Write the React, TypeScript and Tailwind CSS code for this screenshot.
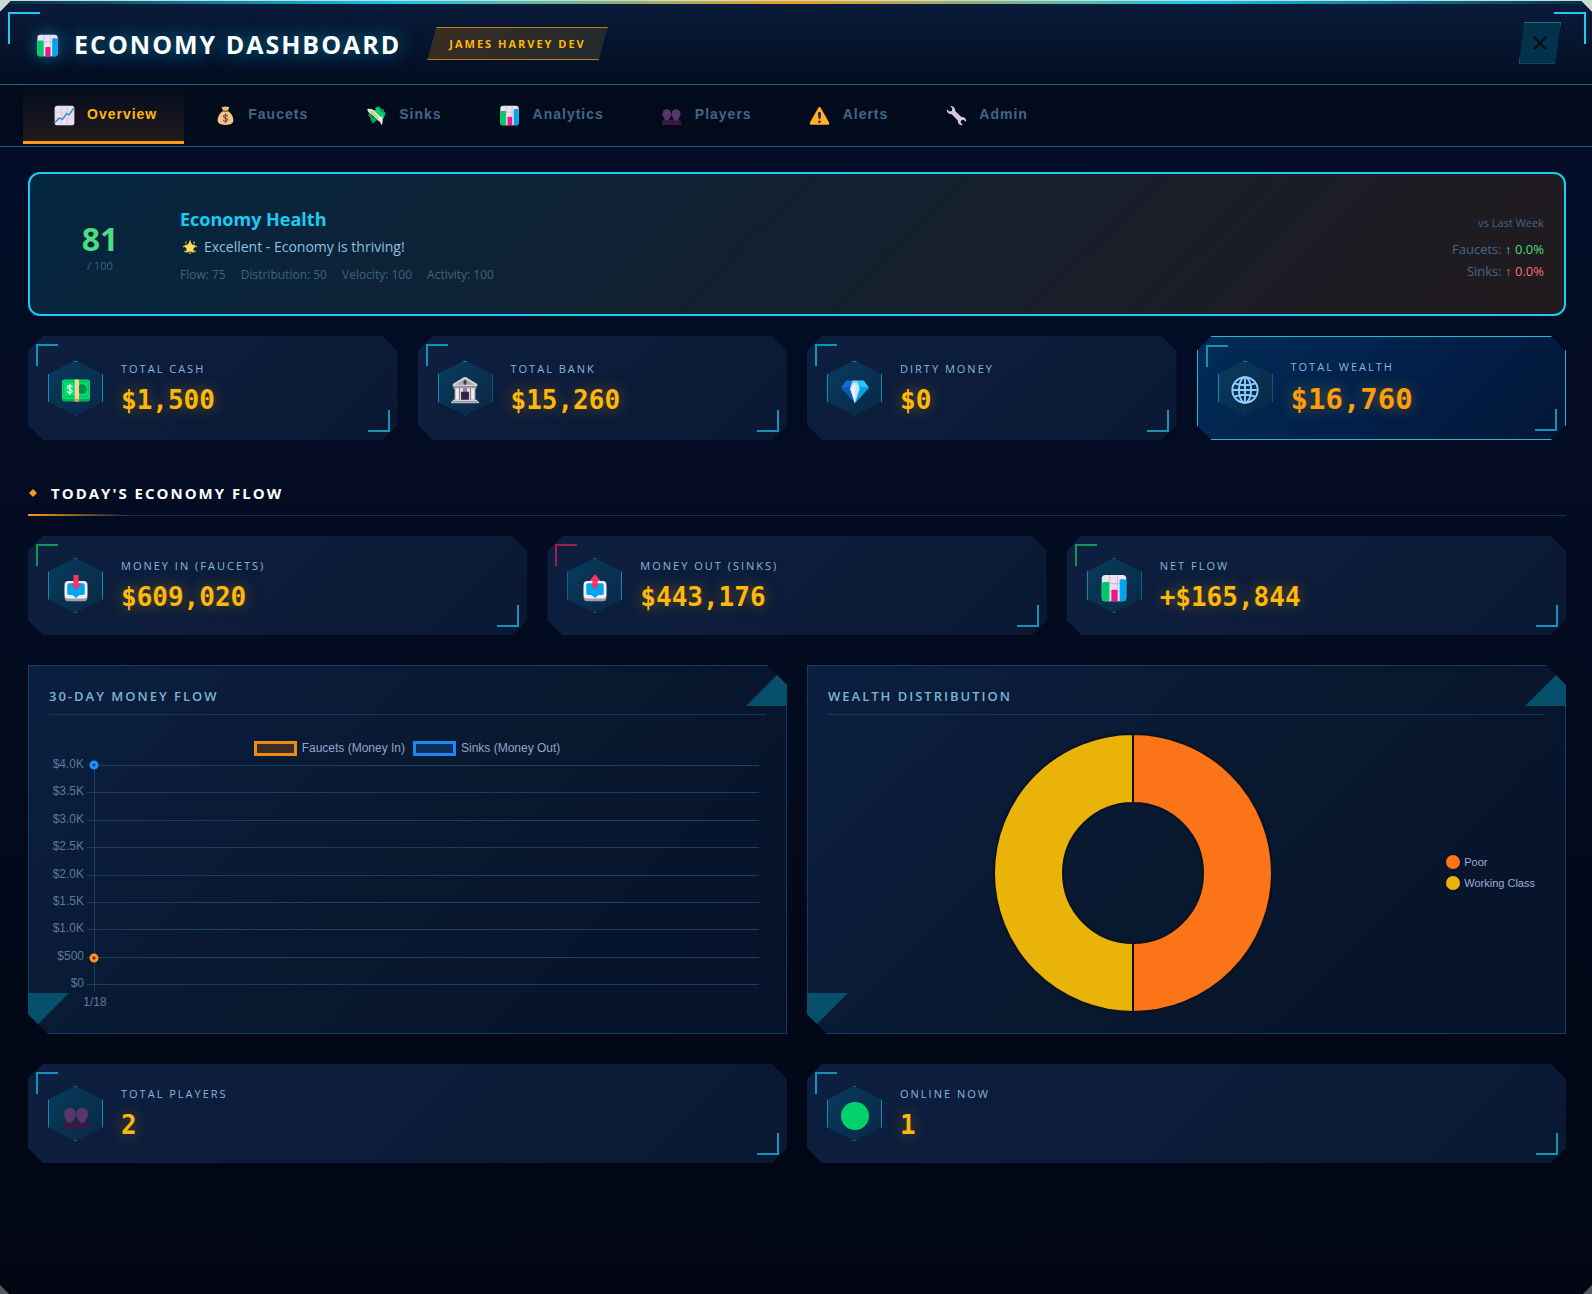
import React, { ReactNode, useState } from "react";

type IconProps = { className?: string };

const ChartBars = ({ className }: IconProps) => (
  <svg viewBox="0 0 32 32" className={className} aria-hidden="true">
    <rect x="2" y="1" width="28" height="30" rx="4" fill="#ede1f2" />
    <path d="M2 11h28M2 20h28M11 1v30M20 1v30" stroke="#cdbcdc" strokeWidth="1.2" />
    <path d="M4 9h6.500v22H6a4 4 0 0 1-4-4V11a2 2 0 0 1 2-2z" fill="#00c968" />
    <path d="M14.500 18h4a1.500 1.500 0 0 1 1.500 1.500V31h-7V19.500a1.500 1.500 0 0 1 1.500-1.500z" fill="#f4128b" />
    <path d="M24 6h4a2 2 0 0 1 2 2v19a4 4 0 0 1-4 4h-3.500V7.500A1.500 1.500 0 0 1 24 6z" fill="#00a6ed" />
  </svg>
);

const ChartUp = ({ className }: IconProps) => (
  <svg viewBox="0 0 32 32" className={className} aria-hidden="true">
    <rect x="1" y="1" width="30" height="30" rx="4" fill="#e9e0f2" />
    <path d="M1 11h30M1 20h30M11 1v30M20 1v30" stroke="#d2c1dd" strokeWidth="1.2" />
    <path d="M2 26l6-6 5 2 6-9 4 2 7-10" fill="none" stroke="#2f93c9" strokeWidth="2.2" strokeLinecap="round" strokeLinejoin="round" />
  </svg>
);

const MoneyBag = ({ className }: IconProps) => (
  <svg viewBox="0 0 32 32" className={className} aria-hidden="true">
    <path d="M11 2.500c2 1 3 .3 5-.5 2 .8 3 1.500 5 .5 1 .3.900 1.500.3 2.500L19 9h-6l-2.300-4c-.6-1-.7-2.200.3-2.500z" fill="#f3bb7e" />
    <path d="M12.500 9h7C25 12 28 18 28 23c0 5-4 7.500-12 7.500S4 28 4 23c0-5 3-11 8.500-14z" fill="#f6c48b" />
    <rect x="11" y="8" width="10" height="2.600" rx="1.300" fill="#9a6a4a" />
    <path d="M19 17c-.6-1.200-1.600-1.700-3-1.700-1.800 0-3 .9-3 2.300 0 3.300 6 1.600 6 4.900 0 1.500-1.200 2.400-3 2.400-1.500 0-2.700-.6-3.200-1.900M16 13.500v13.300" fill="none" stroke="#6b4a43" strokeWidth="1.700" strokeLinecap="round" />
  </svg>
);

const MoneyWings = ({ className }: IconProps) => (
  <svg viewBox="0 0 32 32" className={className} aria-hidden="true">
    <path d="M14 4l5-2 11 10-3 8-6 2z" fill="#00b566" />
    <path d="M8 12l10-8 10 11-8 9z" fill="#00d26a" />
    <path d="M21 6c3-1 6 0 7 2-1 2-3 3-5 2z" fill="#12864f" />
    <path d="M2 6c4-1 8 0 11 3l11 11-4 5L8 14C4 12 2 9 2 6z" fill="#f1ecd4" />
    <path d="M5 8c3 0 6 1 8 4l8 9-2 2L9 13C7 12 5 10 5 8z" fill="#b8d86a" />
    <path d="M4 12l6 4-1 5-5-4zM6 20l6-2 5 5-7 5z" fill="#00a65c" />
    <path d="M18 21l7-4c1 5 1 9-1 14-2-4-4-7-6-10z" fill="#e8e1ee" />
  </svg>
);

const Busts = ({ className }: IconProps) => (
  <svg viewBox="0 0 32 32" className={className} aria-hidden="true">
    <path d="M1 29c0-5 3-7.500 8-7.500 3 0 5.500 1 7 2 1.500-1 4-2 7-2 5 0 8 2.500 8 7.500 0 1-.6 1.500-1.500 1.500h-27C1.600 30.500 1 30 1 29z" fill="#3a1a45" />
    <path d="M9 6.500c4 0 6.500 2.500 6.500 6.500 1 1 .6 3-.5 3.500-.7 3-2.500 5.500-3.500 6.300-1 1.500-4 1.500-5 0C5.500 22 3.700 19.500 3 16.500 1.900 16 1.500 14 2.500 13c0-4 2.500-6.500 6.500-6.500z" fill="#56366b" />
    <path d="M23 6.500c4 0 6.500 2.500 6.500 6.500 1 1 .6 3-.5 3.500-.7 3-2.500 5.500-3.500 6.300-1 1.500-4 1.500-5 0-1-.8-2.800-3.300-3.500-6.300-1.100-.5-1.500-2.500-.5-3.500 0-4 2.500-6.500 6.500-6.500z" fill="#56366b" />
  </svg>
);

const Warning = ({ className }: IconProps) => (
  <svg viewBox="0 0 32 32" className={className} aria-hidden="true">
    <path d="M14.200 4a2.100 2.100 0 0 1 3.600 0l12.800 22.800c.8 1.500-.2 3.200-1.800 3.200H3.200c-1.600 0-2.600-1.700-1.800-3.200z" fill="#ffb02e" />
    <path d="M16 10.500c1.500 0 2.400 1 2.300 2.400l-.7 7.400c-.1 1-.7 1.600-1.600 1.600s-1.500-.6-1.600-1.600l-.7-7.400c-.1-1.400.8-2.400 2.300-2.400z" fill="#321b41" />
    <circle cx="16" cy="25.500" r="1.900" fill="#321b41" />
  </svg>
);

const WrenchIcon = ({ className }: IconProps) => (
  <svg viewBox="0 0 32 32" className={className} aria-hidden="true">
    <path d="M6.500 1.800c4.500-.6 8 2.700 7.500 7.200l9.500 9.300c4.500-.6 8.200 3 7 7.700l-3.700-3.500-3.600.7-.9 3.600 3.600 3.700c-4.700 1-8.400-2.500-7.900-7L8.700 14C4.300 14.500.6 11 1.500 6.500L5 10l3.900-.8.700-3.800z" fill="#d3c9de" />
  </svg>
);

const GlowStar = ({ className }: IconProps) => (
  <svg viewBox="0 0 32 32" className={className} aria-hidden="true">
    <g fill="#f5b82e">
      <circle cx="16" cy="2.500" r="2" /><circle cx="25.500" cy="5.500" r="2" /><circle cx="30" cy="15" r="2" />
      <circle cx="27" cy="26" r="2" /><circle cx="16" cy="30" r="2" /><circle cx="5" cy="26" r="2" />
      <circle cx="2" cy="15" r="2" /><circle cx="6.500" cy="5.500" r="2" />
    </g>
    <path d="M16 6l3.400 6 7.100 1.500-4.900 5.500.8 7.500-6.400-3-6.400 3 .8-7.500-4.900-5.500 7.100-1.500z" fill="#ffd95c" stroke="#ffd95c" strokeWidth="4.500" strokeLinejoin="round" />
  </svg>
);

const Cash = ({ className }: IconProps) => (
  <svg viewBox="0 0 32 32" className={className} aria-hidden="true">
    <rect x="0" y="6" width="32" height="23" rx="2.500" fill="#00b25b" />
    <rect x="0" y="4" width="32" height="22" rx="2.500" fill="#00e070" />
    <rect x="2" y="6.500" width="28" height="17" rx="1.500" fill="none" stroke="#00b35c" strokeWidth="1.200" />
    <circle cx="23" cy="15" r="5.500" fill="#008a4d" />
    <path d="M11.500 12.500c-.5-1.200-1.400-1.600-2.500-1.600-1.500 0-2.600.8-2.600 2 0 2.900 5.300 1.400 5.300 4.300 0 1.300-1.100 2.100-2.700 2.100-1.300 0-2.300-.5-2.800-1.700M9 9.500v11.400" fill="none" stroke="#d8ffe9" strokeWidth="1.500" strokeLinecap="round" />
    <rect x="14.500" y="4" width="5" height="25" fill="#ffcf8f" />
    <rect x="14.500" y="26" width="5" height="3" fill="#e59c5b" />
  </svg>
);

const Bank = ({ className }: IconProps) => (
  <svg viewBox="0 0 32 32" className={className} aria-hidden="true">
    <path d="M14.500 1.500a3 3 0 0 1 3 0L30 9v3H2V9z" fill="#d4d0d6" />
    <path d="M16 3.500L27 10H5z" fill="#aaa5ad" />
    <path d="M3 12h26v3H3z" fill="#a39fa6" />
    <path d="M4 14h24v14H4z" fill="#8a858e" />
    <path d="M5 14h4v13H5zM10.500 14h3v13h-3zM18.500 14h3v13h-3zM23 14h4v13h-4z" fill="#eeecef" />
    <path d="M11.500 18h9v9.500h-9z" fill="#35214a" />
    <path d="M2 27h28v1.800H2z" fill="#d4d0d6" />
    <path d="M0 28.800h32V31H0z" fill="#b8b4bb" />
    <ellipse cx="16" cy="7.400" rx="1.800" ry="2.800" fill="#47384f" />
  </svg>
);

const Gem = ({ className }: IconProps) => (
  <svg viewBox="0 0 32 32" className={className} aria-hidden="true">
    <path d="M6 5h7l-2.500 8.500H0z" fill="#1769e0" />
    <path d="M13 5h6l2.500 8.500h-11z" fill="#7ed3ff" />
    <path d="M19 5h7l6 8.500H21.500z" fill="#26c9fc" />
    <path d="M0 13.500h10.500L16 31z" fill="#0f55c4" />
    <path d="M32 13.500H21.500L16 31z" fill="#00a6ed" />
    <path d="M13.500 8h5l3 6.500L16 31l-5.500-16.500z" fill="#c4e6ff" />
    <path d="M16 8v23l-5.500-16.500z" fill="#e4f4ff" />
  </svg>
);

const GlobeIcon = ({ className }: IconProps) => (
  <svg viewBox="0 0 32 32" className={className} fill="none" stroke="#8ecbff" strokeWidth="2.200" aria-hidden="true">
    <circle cx="16" cy="16" r="14.500" />
    <ellipse cx="16" cy="16" rx="7" ry="14.500" />
    <path d="M16 1.500v29M1.500 16h29M4 8.500c7 2.500 17 2.500 24 0M4 23.500c7-2.500 17-2.500 24 0" />
  </svg>
);

const Tray = ({ className, children }: IconProps & { children: ReactNode }) => (
  <svg viewBox="0 0 32 32" className={className} aria-hidden="true">
    <rect x="3" y="11" width="26" height="20" rx="4" fill="#a39aab" />
    <rect x="3" y="8" width="26" height="20" rx="4" fill="#f3eef7" />
    <path d="M8 10.500h16a2 2 0 0 1 2 2V22a2 2 0 0 1-2 2h-4l-4 3.500L12 24H8a2 2 0 0 1-2-2v-9.500a2 2 0 0 1 2-2z" fill="#00a6ed" />
    {children}
  </svg>
);

const Inbox = ({ className }: IconProps) => (
  <Tray className={className}><path d="M13 1h6v10h3.200L16 17.500 9.800 11H13z" fill="#f8315f" /></Tray>
);
const Outbox = ({ className }: IconProps) => (
  <Tray className={className}><path d="M13 16V8H9.500L16 0l6.500 8H19v8z" fill="#f8315f" /></Tray>
);
const GreenDot = ({ className }: IconProps) => (
  <svg viewBox="0 0 32 32" className={className} aria-hidden="true"><circle cx="16" cy="16" r="16" fill="#00d26a" /></svg>
);

type Icon = (p: IconProps) => React.JSX.Element;

const tabs: { label: string; Icon: Icon }[] = [
  { label: "Overview", Icon: ChartUp },
  { label: "Faucets", Icon: MoneyBag },
  { label: "Sinks", Icon: MoneyWings },
  { label: "Analytics", Icon: ChartBars },
  { label: "Players", Icon: Busts },
  { label: "Alerts", Icon: Warning },
  { label: "Admin", Icon: WrenchIcon },
];

const accents = {
  cyan: "border-[#0f93b8]",
  green: "border-[#11935a]",
  red: "border-[#a41f48]",
};

function StatCard({ Icon, label, value, accent = "cyan", featured = false }: {
  Icon: Icon; label: string; value: string; accent?: keyof typeof accents; featured?: boolean;
}) {
  return (
    <article
      className={
        "relative flex items-center gap-[18px] p-5 [clip-path:polygon(15px_0,calc(100%-15px)_0,100%_15px,100%_calc(100%-15px),calc(100%-15px)_100%,15px_100%,0_calc(100%-15px),0_15px)] " +
        (featured
          ? "border border-[#27b6d8] bg-linear-135 from-[#022c57] via-[#01204a] to-[#021635]"
          : "bg-linear-135 from-[#0d1f40] to-[#0a1832]")
      }
    >
      <span className={"absolute top-2 left-2 size-[22px] border-t-2 border-l-2 " + accents[accent]} />
      <span className="absolute right-2 bottom-2 size-[22px] border-r-2 border-b-2 border-[#1593b8]" />
      <div className="flex size-[55px] shrink-0 items-center justify-center border border-[#108aae] bg-linear-135 from-[#083c5c] to-[#092747] pt-1 [clip-path:polygon(50%_0,100%_25%,100%_75%,50%_100%,0_75%,0_25%)]">
        <Icon className="size-7" />
      </div>
      <div>
        <h3 className="text-[11px] leading-5 tracking-[2px] text-[#86b6dc] uppercase">{label}</h3>
        <p
          className={
            "pt-[3px] font-['DejaVu_Sans_Mono',monospace] font-bold [text-shadow:0_0_15px_rgba(255,183,0,0.4)] " +
            (featured ? "text-[29px] leading-[39px] text-[#ff9d0a]" : "text-[26px] leading-[36px] text-[#ffb70a]")
          }
        >
          {value}
        </p>
      </div>
    </article>
  );
}

function Panel({ title, children }: { title: string; children: ReactNode }) {
  return (
    <section className="relative border border-[#153a66] bg-linear-135 from-[#0b1f41] via-[#08182f] to-[#07132a] p-5 [clip-path:polygon(0_0,calc(100%-20px)_0,100%_20px,100%_100%,20px_100%,0_calc(100%-20px))]">
      <span className="absolute -top-px -right-px size-[41px] bg-[#06506c] [clip-path:polygon(100%_0,100%_100%,0_100%)]" />
      <span className="absolute -bottom-px -left-px size-[41px] bg-[#06506c] [clip-path:polygon(0_0,100%_0,0_100%)]" />
      <h2 className="border-b border-[#14365f] pb-2 text-[13px] leading-5 font-semibold tracking-[2px] text-[#7fb3d6] uppercase">{title}</h2>
      <div className="mt-[18px] h-[280px]">{children}</div>
    </section>
  );
}

const ticks = ["$4.0K", "$3.5K", "$3.0K", "$2.5K", "$2.0K", "$1.5K", "$1.0K", "$500", "$0"];
const tickY = (i: number) => 32 + Math.round(i * 27.4);

function FlowChart() {
  return (
    <div className="relative h-full pr-[7px] font-['Liberation_Sans',Arial,sans-serif] text-[12px]">
      <ul className="absolute inset-x-0 top-2 flex items-center justify-center gap-2 pr-px leading-[15px] text-[#94a4c9]">
        <li className="flex items-center gap-[5px]">
          <span className="h-[15px] w-[43px] border-3 border-[#f08a17] bg-[#3a2c27]" />Faucets (Money In)
        </li>
        <li className="flex items-center gap-[5px]">
          <span className="h-[15px] w-[43px] border-3 border-[#1e88f0] bg-[#0a2f5c]" />Sinks (Money Out)
        </li>
      </ul>
      <svg className="h-full w-full" role="img" aria-label="30-day money flow">
        {ticks.map((t, i) => (
          <g key={t}>
            <line x1="38" x2="100%" y1={tickY(i)} y2={tickY(i)} stroke="#1c3d66" shapeRendering="crispEdges" />
            <text x="35" y={tickY(i) + 3} textAnchor="end" fill="#5b7a9d">{t}</text>
          </g>
        ))}
        <line x1="45" x2="45" y1="32" y2="259" stroke="#1c3d66" shapeRendering="crispEdges" />
        <text x="46" y="273" textAnchor="middle" fill="#5b7a9d">1/18</text>
        <circle cx="45" cy="32" r="3" fill="#0b3d78" stroke="#1e90ff" strokeWidth="3" />
        <circle cx="45" cy="225" r="3" fill="#4a2c10" stroke="#ff9417" strokeWidth="3" />
      </svg>
    </div>
  );
}

function WealthChart() {
  return (
    <div className="flex h-full items-center font-['Liberation_Sans',Arial,sans-serif]">
      <div className="flex flex-1 justify-center pr-2">
        <svg viewBox="0 0 280 280" className="h-[280px] w-[280px]" role="img" aria-label="Wealth distribution">
          <g stroke="#0a1220" strokeWidth="2">
            <path d="M140 1a139 139 0 0 1 0 278v-69a70 70 0 0 0 0-140z" fill="#fb7417" />
            <path d="M140 279a139 139 0 0 1 0-278v69a70 70 0 0 0 0 140z" fill="#eab30a" />
          </g>
        </svg>
      </div>
      <ul className="flex flex-col gap-[7px] pr-[10px] pb-[2px] text-[11px] leading-[14px] text-[#9dadd6]">
        <li className="flex items-center gap-1"><span className="size-[14px] rounded-full bg-[#fb7417]" />Poor</li>
        <li className="flex items-center gap-1"><span className="size-[14px] rounded-full bg-[#eab30a]" />Working Class</li>
      </ul>
    </div>
  );
}

export default function App() {
  const [active, setActive] = useState("Overview");
  return (
    <div className="min-h-screen overflow-hidden bg-linear-to-b from-[#c9dcd2] to-[#55595e] pt-px font-['Open_Sans','Segoe_UI',sans-serif]">
      <div className="relative min-h-[calc(100vh-1px)] bg-linear-to-b from-[#030d2a] via-[#020b1f] to-[#010612] [clip-path:polygon(11px_0,calc(100%-11px)_0,100%_11px,100%_calc(100%-9px),calc(100%-9px)_100%,9px_100%,0_calc(100%-9px),0_11px)]">
        <div className="absolute inset-x-0 top-0 h-[3px] [background-image:linear-gradient(90deg,#0a2b48_0%,#12c8f0_25%,#f39a17_50%,#12c8f0_75%,#0a2b48_100%)]" />
        <span className="absolute top-[11px] left-2 size-8 border-t-2 border-l-2 border-[#17cdf2]" />
        <span className="absolute top-[11px] right-[6px] size-8 border-t-2 border-r-2 border-[#17cdf2]" />

        <header className="flex h-[84px] items-center justify-between border-b border-[#176a80] bg-linear-to-b from-[#0a1c3b] to-[#030d21] pr-[31px] pl-9">
          <div className="flex items-center gap-[26px] pt-[2px]">
            <h1 className="flex items-center gap-[15px] text-[25px] leading-8 font-bold tracking-[2px] text-white uppercase [text-shadow:0_0_20px_rgba(0,212,255,0.6)]">
              <ChartBars className="mt-1 size-[23px] drop-shadow-[0_0_8px_rgba(0,212,255,0.5)]" />
              Economy Dashboard
            </h1>
            <span className="border border-[#b87b1d] bg-linear-135 from-[#3a2c22] to-[#1f2a2c] px-[21px] py-2 text-[11px] leading-[15px] font-bold tracking-[2px] text-[#ffb70a] uppercase [clip-path:polygon(5%_0,100%_0,95%_100%,0_100%)]">
              James Harvey Dev
            </span>
          </div>
          <button aria-label="Close" className="flex size-[42px] items-center justify-center border border-[#19758e] bg-[#04324d] [clip-path:polygon(12%_0,100%_0,86%_100%,0_100%)]">
            <svg viewBox="0 0 14 14" className="size-[14px]" stroke="#02090f" strokeWidth="1.800" fill="none"><path d="M1 1l12 12M13 1L1 13" /></svg>
          </button>
        </header>

        <nav className="flex border-b border-[#176078] bg-[#020b1c] pb-[2px] pl-[23px]">
          {tabs.map(({ label, Icon }) => (
            <button
              key={label}
              onClick={() => setActive(label)}
              className={
                "flex h-[59px] items-center gap-[10px] border-b-3 pt-[3px] pr-[27px] pl-7 font-['Liberation_Sans',Arial,sans-serif] text-[14px] font-bold tracking-[1px] " +
                (active === label
                  ? "border-[#ff9a14] bg-linear-to-b from-[#030b1c] to-[#211a1c] text-[#ffb70a]"
                  : "border-transparent text-[#3f6788]")
              }
            >
              <span className="flex w-[26px] justify-center"><Icon className="mt-[2px] size-[21px]" /></span>
              <span>{label}</span>
            </button>
          ))}
        </nav>

        <main className="pt-[25px] pr-[26px] pb-10 pl-7">
          <section className="flex h-[144px] items-center gap-[30px] rounded-xl border-2 border-[#17cdf2] bg-linear-135 from-[#032640] via-[#122030] to-[#211a1d] px-5 pt-[6px]">
            <div className="w-[100px] text-center">
              <p className="text-[32px] leading-9 font-bold text-[#4ade80]">81</p>
              <p className="pt-px text-[11px] leading-4 text-[#3f637f]">/ 100</p>
            </div>
            <div className="flex-1">
              <h2 className="text-[18px] leading-7 font-bold text-[#17cdf2]">Economy Health</h2>
              <p className="flex items-center gap-[7px] pl-[3px] text-[14px] leading-7 text-[#8fc0e0]">
                <GlowStar className="size-[14px]" />Excellent - Economy is thriving!
              </p>
              <div className="flex gap-[15px] text-[12px] leading-7 text-[#3f637f]">
                <span>Flow: 75</span><span>Distribution: 50</span><span>Velocity: 100</span><span>Activity: 100</span>
              </div>
            </div>
            <div className="text-right text-[13px] leading-[22px] text-[#45678a]">
              <p className="mb-1 text-[11px]">vs Last Week</p>
              <p>Faucets: <span className="text-[#4ade80]">↑ 0.0%</span></p>
              <p>Sinks: <span className="text-[#f87171]">↑ 0.0%</span></p>
            </div>
          </section>

          <div className="mt-5 grid grid-cols-4 gap-5">
            <StatCard Icon={Cash} label="Total Cash" value="$1,500" />
            <StatCard Icon={Bank} label="Total Bank" value="$15,260" />
            <StatCard Icon={Gem} label="Dirty Money" value="$0" />
            <StatCard Icon={GlobeIcon} label="Total Wealth" value="$16,760" featured />
          </div>

          <h2 className="relative mt-[41px] flex items-center gap-[14px] border-b border-[#12305c] pb-[10px] pl-[1px] text-[15px] leading-6 font-bold tracking-[2px] text-white uppercase">
            <svg viewBox="0 0 8 8" className="size-2" aria-hidden="true"><path d="M4 0l4 4-4 4-4-4z" fill="#ff9a14" /></svg>
            Today's Economy Flow
            <span className="absolute -bottom-px left-0 h-[2px] w-[100px] bg-linear-to-r from-[#ff9a14] to-transparent" />
          </h2>

          <div className="mt-5 grid grid-cols-3 gap-5">
            <StatCard Icon={Inbox} label="Money In (Faucets)" value="$609,020" accent="green" />
            <StatCard Icon={Outbox} label="Money Out (Sinks)" value="$443,176" accent="red" />
            <StatCard Icon={ChartBars} label="Net Flow" value="+$165,844" accent="green" />
          </div>

          <div className="mt-[30px] grid grid-cols-2 gap-5">
            <Panel title="30-Day Money Flow"><FlowChart /></Panel>
            <Panel title="Wealth Distribution"><WealthChart /></Panel>
          </div>

          <div className="mt-[30px] grid grid-cols-2 gap-5">
            <StatCard Icon={Busts} label="Total Players" value="2" />
            <StatCard Icon={GreenDot} label="Online Now" value="1" />
          </div>
        </main>
      </div>
    </div>
  );
}
